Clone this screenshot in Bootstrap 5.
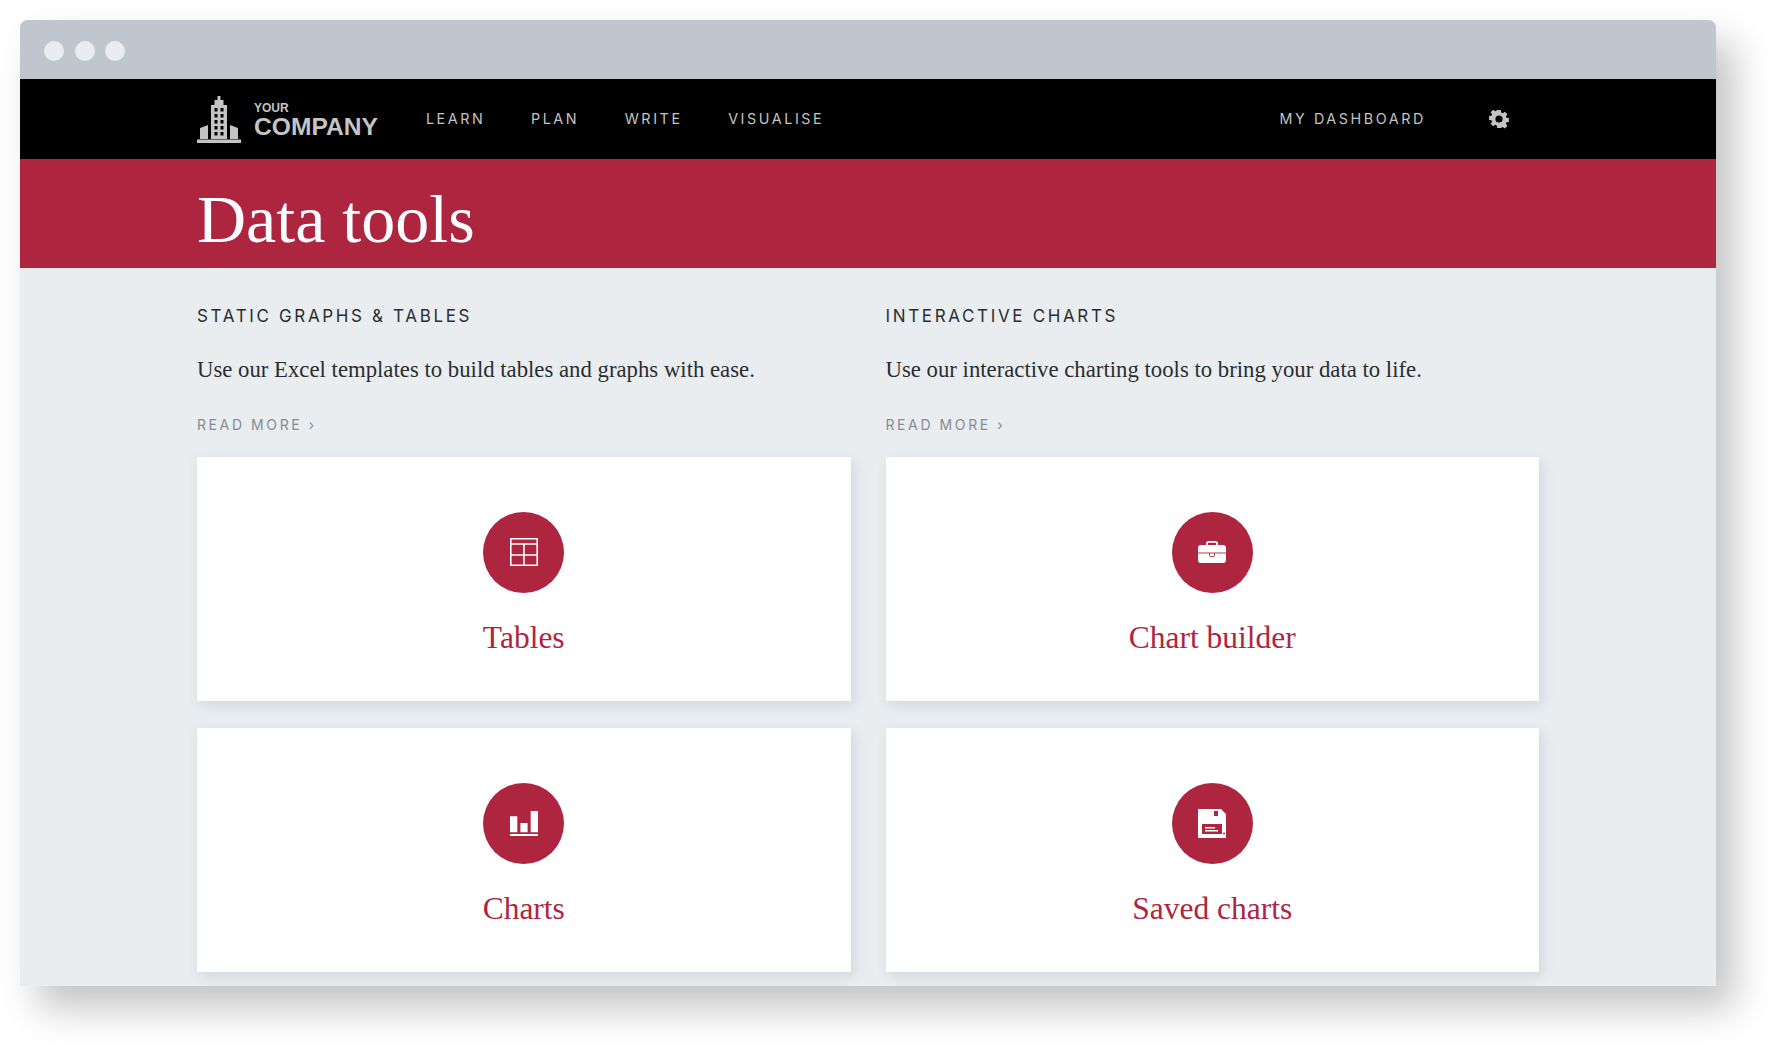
<!DOCTYPE html>
<html lang="en">
<head>
    <meta charset="UTF-8">
    <meta name="viewport" content="width=device-width, initial-scale=1">
    <title>Data tools</title>
    <link href="https://cdn.jsdelivr.net/npm/bootstrap@5.3.0/dist/css/bootstrap.min.css" rel="stylesheet">
    <style>
        body { background: #fff; font-family: "Inter", sans-serif; height: 1046px; padding: 20px 0 0 20px; }
        .browser-window {
            width: 1696px;
            height: 966px;
            background: #e9edf0;
            border-radius: 8px 8px 0 0;
            box-shadow: 18px 22px 38px rgba(0, 0, 0, .24);
            overflow: hidden;
        }
        .title-bar { height: 59px; background: #bfc6cd; padding: 21px 0 0 24px; gap: 10.5px; }
        .title-dot { width: 20px; height: 20px; border-radius: 50%; background: #e9edf0; }
        .page-width { width: 1342px; margin: 0 auto; }
        .top-nav { height: 80px; background: #000; }
        .brand-box { gap: 13px; margin-right: 48px; color: #c4c4c4; font-family: "Liberation Sans", sans-serif; font-weight: 700; }
        .brand-small { font-size: 12px; line-height: 12px; margin: 2px 0 1px; }
        .brand-big { font-size: 24.6px; line-height: 24px; }
        .top-nav .nav-link {
            padding: 0;
            color: #c4c4c4;
            font-size: 14.3px;
            letter-spacing: 2.6px;
            font-weight: 400;
        }
        .nav-links { gap: 45.5px; }
        .dash-links { gap: 63px; margin-right: 30px; }
        .red-band { height: 109px; background: #ae2540; color: #fff; }
        .red-band h1 {
            font-family: "Liberation Serif", serif;
            font-size: 68px;
            line-height: 108px;
            padding-top: 6px;
            margin: 0;
            font-weight: 400;
        }
        .tool-row { --bs-gutter-x: 35px; --bs-gutter-y: 0; }
        .intro-title {
            font-size: 17px;
            letter-spacing: 2.65px;
            line-height: 24px;
            margin: 36px 0 0;
            color: #2a2d30;
            font-weight: 400;
        }
        .intro-text {
            font-family: "Liberation Serif", serif;
            font-size: 22.75px;
            line-height: 30px;
            margin: 27px 0 0;
            color: #2a2d30;
        }
        .read-more {
            display: block;
            margin-top: 29.5px;
            height: 42px;
            font-size: 14px;
            letter-spacing: 2.6px;
            line-height: 20px;
            color: #868c92;
            text-decoration: none;
        }
        .tool-card {
            height: 244.5px;
            margin-bottom: 26.5px;
            border: 0;
            border-radius: 0;
            padding-top: 55px;
            box-shadow: 3px 4px 12px rgba(60, 80, 100, .14);
        }
        .tool-circle { width: 81px; height: 81px; border-radius: 50%; background: #ae2540; }
        .tool-name {
            font-family: "Liberation Serif", serif;
            font-size: 31.5px;
            line-height: 40px;
            margin-top: 25px;
            color: #ae2540;
        }
    </style>
</head>
<body>

<div class="browser-window">
    <div class="title-bar d-flex">
        <div class="title-dot"></div>
        <div class="title-dot"></div>
        <div class="title-dot"></div>
    </div>

    <nav class="top-nav">
        <div class="page-width h-100 d-flex align-items-center">
            <a class="brand-box d-flex align-items-center text-decoration-none" href="#">
                <svg width="44" height="47" viewBox="0 0 44 47" fill="#c4c4c4">
                    <path fill-rule="evenodd" d="M20.500 0h3v4h3v5h3.500v34h-16V9h3.500V4h3zM17.500 12v3.500h3V12zM23.500 12v3.500h3V12zM17.500 18v3.500h3V18zM23.500 18v3.500h3V18zM17.500 24v3.500h3V24zM23.500 24v3.500h3V24zM17.500 30v3.500h3V30zM23.500 30v3.500h3V30zM17.500 36v3.500h3V36zM23.500 36v3.500h3V36z"/>
                    <path d="M3 32l8-3v14H3zM33 29l8 3v11h-8zM0 43.500h44V47H0z"/>
                </svg>
                <span class="d-flex flex-column">
                    <span class="brand-small">YOUR</span>
                    <span class="brand-big">COMPANY</span>
                </span>
            </a>
            <ul class="nav nav-links">
                <li class="nav-item"><a class="nav-link" href="#">LEARN</a></li>
                <li class="nav-item"><a class="nav-link" href="#">PLAN</a></li>
                <li class="nav-item"><a class="nav-link" href="#">WRITE</a></li>
                <li class="nav-item"><a class="nav-link" href="#">VISUALISE</a></li>
            </ul>
            <ul class="nav dash-links ms-auto align-items-center">
                <li class="nav-item"><a class="nav-link" href="#">MY DASHBOARD</a></li>
                <li class="nav-item d-flex">
                    <svg width="20" height="20" viewBox="0 0 20 20" fill="#c4c4c4">
                        <path fill-rule="evenodd" d="M8 0h4l.5 2.800 1.700.700 2.300-1.600 2.800 2.800-1.600 2.300.700 1.700 2.800.5v4l-2.800.5-.7 1.700 1.600 2.300-2.800 2.800-2.300-1.600-1.700.7L12 20H8l-.5-2.800-1.700-.7-2.300 1.600-2.800-2.800 1.600-2.300-.7-1.700L-1.200 11V7l2.800-.5.7-1.700-1.600-2.300 2.800-2.800 2.300 1.600 1.700-.7zM10 6a3.500 3.500 0 1 0 0 8 3.500 3.500 0 0 0 0-8z" transform="translate(1 1) scale(.9)"/>
                    </svg>
                </li>
            </ul>
        </div>
    </nav>

    <header class="red-band">
        <div class="page-width">
            <h1>Data tools</h1>
        </div>
    </header>

    <main class="page-width">
        <div class="row tool-row">
            <div class="col-6">
                <h2 class="intro-title">STATIC GRAPHS &amp; TABLES</h2>
                <p class="intro-text">Use our Excel templates to build tables and graphs with ease.</p>
                <a class="read-more" href="#">READ MORE ›</a>
            </div>
            <div class="col-6">
                <h2 class="intro-title">INTERACTIVE CHARTS</h2>
                <p class="intro-text">Use our interactive charting tools to bring your data to life.</p>
                <a class="read-more" href="#">READ MORE ›</a>
            </div>
            <div class="col-6">
                <div class="card tool-card align-items-center">
                    <div class="tool-circle d-flex align-items-center justify-content-center">
                        <svg width="28" height="28" viewBox="0 0 28 28" fill="none" stroke="#fff" stroke-width="1.600">
                            <path d="M.8.8h26.400v26.400H.8zM.8 6h26.400M.8 17h26.400M14 6v21"/>
                        </svg>
                    </div>
                    <div class="tool-name">Tables</div>
                </div>
            </div>
            <div class="col-6">
                <div class="card tool-card align-items-center">
                    <div class="tool-circle d-flex align-items-center justify-content-center">
                        <svg width="28" height="22" viewBox="0 0 28 22" fill="#fff">
                            <path d="M8 4V2.500A2.500 2.500 0 0 1 10.500 0h7A2.500 2.500 0 0 1 20 2.500V4h-1.800V2.700a1 1 0 0 0-1-1h-6.400a1 1 0 0 0-1 1V4z"/>
                            <path d="M3 4h22a3 3 0 0 1 3 3v12a3 3 0 0 1-3 3H3a3 3 0 0 1-3-3V7a3 3 0 0 1 3-3z"/>
                            <path fill="none" stroke="#ae2540" stroke-width=".9" d="M11.500 12v2.500a1 1 0 0 0 1 1h3a1 1 0 0 0 1-1V12M0 12h28"/>
                        </svg>
                    </div>
                    <div class="tool-name">Chart builder</div>
                </div>
            </div>
            <div class="col-6">
                <div class="card tool-card align-items-center">
                    <div class="tool-circle d-flex align-items-center justify-content-center">
                        <svg width="28" height="25" viewBox="0 0 28 25" fill="#fff">
                            <path d="M0 5.300h7.300v16H0zM10.400 12h7.200v9.300h-7.200zM20.700 0H28v21.300h-7.300zM0 23h28v2H0z"/>
                        </svg>
                    </div>
                    <div class="tool-name">Charts</div>
                </div>
            </div>
            <div class="col-6">
                <div class="card tool-card align-items-center">
                    <div class="tool-circle d-flex align-items-center justify-content-center">
                        <svg width="28" height="29" viewBox="0 0 28 29" fill="#fff">
                            <path fill-rule="evenodd" d="M0 0h23l5 5v24H0zM16 2v5h4V2zM4 15v10h20V15z"/>
                            <path d="M7 18h10v1.500H7zM7 21h13v1.500H7z"/>
                            <circle cx="26" cy="24.500" r="1" fill="#ae2540"/>
                        </svg>
                    </div>
                    <div class="tool-name">Saved charts</div>
                </div>
            </div>
        </div>
    </main>
</div>

<script src="https://cdn.jsdelivr.net/npm/bootstrap@5.3.0/dist/js/bootstrap.bundle.min.js"></script>
</body>
</html>
